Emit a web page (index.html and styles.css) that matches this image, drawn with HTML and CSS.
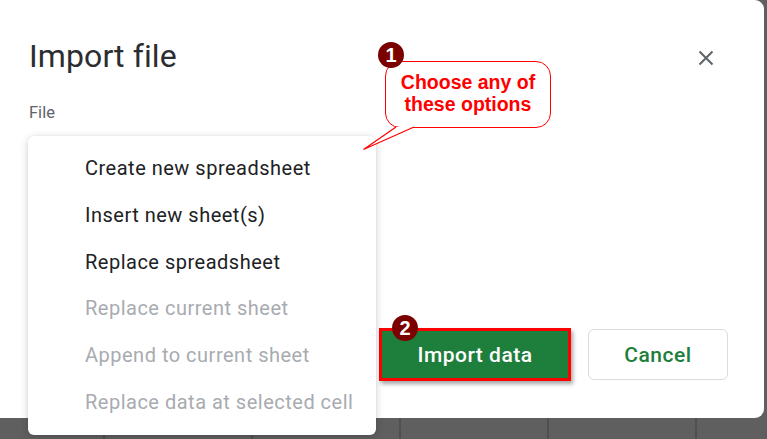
FILE: index.html
```html
<!DOCTYPE html>
<html>
<head>
<meta charset="utf-8">
<link rel="stylesheet" href="styles.css">
</head>
<body>
<div class="dialog">
  <div class="header">
    <h1 class="title">Import file</h1>
    <button class="close" aria-label="Close">
      <svg width="16" height="16" viewBox="0 0 16 16"><path d="M1.5 1.5 L14.5 14.5 M14.5 1.5 L1.5 14.5" stroke="#5f6368" stroke-width="2" fill="none"/></svg>
    </button>
  </div>
  <div class="label">File</div>
  <div class="spacer"></div>
  <div class="actions">
    <button class="btn primary">Import data<span class="badge badge-2">2</span></button>
    <button class="btn secondary">Cancel</button>
  </div>

  <ul class="menu">
    <li class="item">Create new spreadsheet</li>
    <li class="item">Insert new sheet(s)</li>
    <li class="item">Replace spreadsheet</li>
    <li class="item disabled">Replace current sheet</li>
    <li class="item disabled">Append to current sheet</li>
    <li class="item disabled">Replace data at selected cell</li>
  </ul>

  <div class="callout">
    <span class="badge badge-1">1</span>
    <svg class="tail" width="60" height="40" viewBox="0 0 60 40"><path d="M34 1 L1.5 23.5 L52 1" fill="#fff" stroke="#ff0000" stroke-width="1.2"/></svg>
    <div class="bubble">Choose any of<br>these options</div>
  </div>
</div>
</body>
</html>
```
FILE: styles.css
```css
* { box-sizing: border-box; }
html, body { margin: 0; padding: 0; }
body {
  width: 767px;
  height: 439px;
  overflow: hidden;
  background-color: #5f5f5f;
  background-image: repeating-linear-gradient(90deg, transparent 0 102px, #4f4f4f 102px 104px, transparent 104px 148px);
  background-position: 1px 0;
  font-family: Roboto, "Liberation Sans", sans-serif;
}
.dialog {
  position: relative;
  width: 764px;
  height: 418px;
  background: #fff;
  border-radius: 0 9px 9px 0;
  padding: 30px 36px 0 29px;
  display: flex;
  flex-direction: column;
}
.header {
  display: flex;
  align-items: center;
  justify-content: space-between;
  height: 52px;
}
.title {
  margin: 0;
  font-weight: 400;
  font-size: 32px;
  color: #2b2d30;
  letter-spacing: 0.1px;
}
.close {
  border: 0;
  background: none;
  padding: 0;
  width: 16px;
  height: 16px;
  margin-right: 14px;
  margin-top: 3px;
}
.label {
  margin-top: 21px;
  font-size: 16.5px;
  color: #5f6368;
}
.spacer { flex: 1; }
.actions {
  display: flex;
  justify-content: flex-end;
  gap: 17px;
  margin-bottom: 37px;
  margin-right: 0;
}
.btn {
  font-family: Roboto, "Liberation Sans", sans-serif;
  font-size: 21px;
  font-weight: 500;
  height: 51px;
  border-radius: 6px;
  letter-spacing: 0.5px;
}
.primary {
  position: relative;
  width: 192px;
  height: 53px;
  margin-top: -1px;
  background: #1e7e3c;
  color: #fff;
  border: 3px solid #ff0000;
  border-radius: 0;
  box-shadow: 2px 3px 4px rgba(0,0,0,0.35);
}
.secondary {
  width: 140px;
  background: #fff;
  color: #1e7e3c;
  border: 1px solid #dadce0;
}
.badge {
  position: absolute;
  width: 26px;
  height: 26px;
  border-radius: 50%;
  background: #7b0000;
  color: #fff;
  font-family: "Liberation Sans", Arial, sans-serif;
  font-weight: 700;
  font-size: 20px;
  line-height: 26px;
  text-align: center;
  letter-spacing: 0;
}
.badge-2 { left: 10px; top: -16px; }
.menu {
  position: absolute;
  left: 28px;
  top: 136px;
  width: 348px;
  height: 299px;
  margin: 0;
  padding: 8px 0;
  list-style: none;
  background: #fff;
  border-radius: 6px;
  box-shadow: 0 2px 8px rgba(0,0,0,0.18), 0 0 2px rgba(0,0,0,0.08);
}
.item {
  height: 46.8px;
  line-height: 48px;
  padding-left: 57px;
  font-size: 20px;
  letter-spacing: 0.5px;
  color: #202124;
  white-space: nowrap;
}
.item.disabled { color: #a8abb0; }
.callout {
  position: absolute;
  left: 362px;
  top: 42px;
  width: 190px;
  height: 110px;
}
.bubble {
  position: absolute;
  left: 23px;
  top: 19px;
  width: 166px;
  height: 67px;
  border: 1.5px solid #ff0000;
  border-radius: 15px;
  background: #fff;
  color: #ff0000;
  font-family: "Liberation Sans", Arial, sans-serif;
  font-weight: 700;
  font-size: 19.5px;
  line-height: 22px;
  text-align: center;
  padding-top: 9px;
}
.tail {
  position: absolute;
  left: 0;
  top: 84px;
  z-index: 1;
}
.badge-1 { left: 16px; top: 0; z-index: 2; }
```
